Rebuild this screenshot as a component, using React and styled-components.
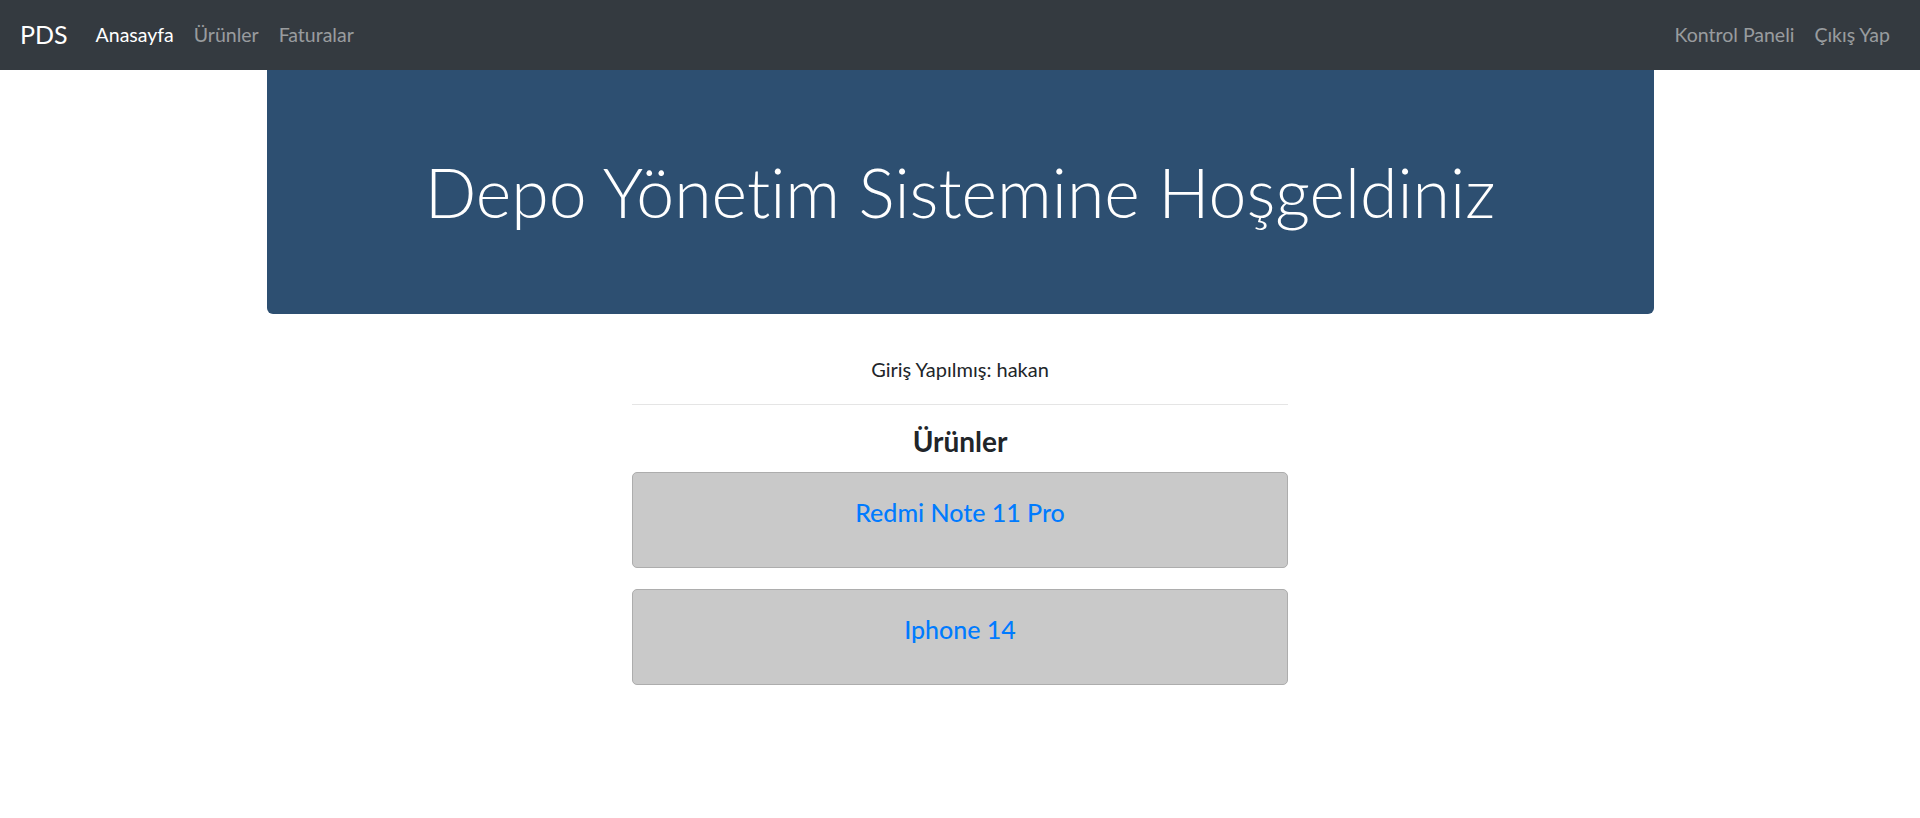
import React from "react"
import styled, { createGlobalStyle } from "styled-components"

const GlobalStyle = createGlobalStyle`
  * { box-sizing: border-box; }
  body {
    margin: 0;
    background: #fff;
    color: #212529;
    font-family: "Lato", "Noto Sans", sans-serif;
    font-size: 20px;
    line-height: 1.5;
    font-variant-ligatures: none;
  }
`

const navLeft = [
  { label: "Anasayfa", active: true },
  { label: "Ürünler" },
  { label: "Faturalar" },
]

const navRight = [{ label: "Kontrol Paneli" }, { label: "Çıkış Yap" }]

const products = ["Redmi Note 11 Pro", "Iphone 14"]

export default function App() {
  return (
    <>
      <GlobalStyle />
      <Navbar>
        <Brand href="#">PDS</Brand>
        <NavList>
          {navLeft.map((item) => (
            <NavLink key={item.label} href="#" $active={item.active}>
              {item.label}
            </NavLink>
          ))}
        </NavList>
        <NavList $right>
          {navRight.map((item) => (
            <NavLink key={item.label} href="#">
              {item.label}
            </NavLink>
          ))}
        </NavList>
      </Navbar>
      <Container>
        <Jumbotron>
          <Title>Depo Yönetim Sistemine Hoşgeldiniz</Title>
        </Jumbotron>
        <Column>
          <LoggedIn>Giriş Yapılmış: hakan</LoggedIn>
          <Divider />
          <SectionTitle>Ürünler</SectionTitle>
          <CardList>
            {products.map((name) => (
              <Card key={name}>
                <CardTitle href="#">{name}</CardTitle>
              </Card>
            ))}
          </CardList>
        </Column>
      </Container>
    </>
  )
}

const Navbar = styled.nav`
  display: flex;
  align-items: center;
  height: 70px;
  padding: 10px 20px;
  background-color: #343a40;
`

const Brand = styled.a`
  font-size: 25px;
  line-height: 1.5;
  color: #fff;
  text-decoration: none;
  margin-right: 18px;
`

const NavList = styled.div`
  display: flex;
  margin-left: ${(p) => (p.$right ? "auto" : "0")};
`

const NavLink = styled.a`
  padding: 10px 10px;
  font-size: 19.5px;
  color: ${(p) => (p.$active ? "#fff" : "rgba(255, 255, 255, 0.5)")};
  text-decoration: none;
`

const Container = styled.div`
  width: 1387px;
  margin: 0 auto;
`

const Jumbotron = styled.div`
  background-color: #2d4f71;
  border-radius: 0 0 6px 6px;
  padding: 80px 40px;
  margin-bottom: 40px;
  text-align: center;
`

const Title = styled.h1`
  margin: 0;
  font-size: 68px;
  font-weight: 300;
  line-height: 84px;
  color: #fff;
`

const Column = styled.div`
  width: 656px;
  margin: 0 auto;
  text-align: center;
`

const LoggedIn = styled.p`
  margin: 0 0 20px;
`

const Divider = styled.hr`
  margin: 0 0 20px;
  border: 0;
  border-top: 1px solid rgba(0, 0, 0, 0.1);
`

const SectionTitle = styled.h4`
  margin: 0 0 13px;
  font-size: 28px;
  font-weight: 700;
  line-height: 1.2;
`

const CardList = styled.div`
  display: flex;
  flex-direction: column;
  gap: 21px;
`

const Card = styled.div`
  height: 96px;
  padding: 24px 25px;
  background-color: #c9c9c9;
  border: 1px solid #adadad;
  border-radius: 5px;
`

const CardTitle = styled.a`
  display: block;
  font-size: 25px;
  font-weight: 500;
  line-height: 1.2;
  color: #007bff;
  text-decoration: none;
`
